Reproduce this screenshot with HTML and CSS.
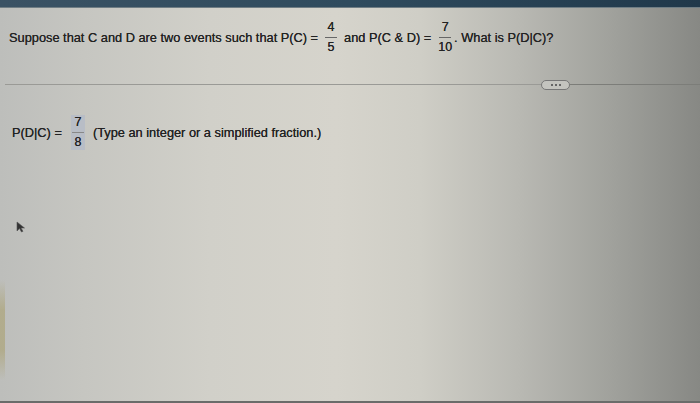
FILE: index.html
```html
<!DOCTYPE html>
<html>
<head>
<meta charset="utf-8">
<link rel="stylesheet" href="styles.css">
</head>
<body>
<div class="screen">
  <div class="topbar"></div>
  <div class="question">
    <span>Suppose that C and D are two events such that P(C) =</span>
    <span class="frac"><span class="num">4</span><span class="den">5</span></span>
    <span>and P(C &amp; D) =</span>
    <span class="frac"><span class="num">7</span><span class="den">10</span></span>
    <span class="tight">. What is P(D|C)?</span>
  </div>
  <div class="divider">
    <div class="rule"></div>
    <div class="more"><span></span><span></span><span></span></div>
    <div class="rule short"></div>
  </div>
  <div class="answer">
    <span>P(D|C) =</span>
    <span class="frac box"><span class="num">7</span><span class="den">8</span></span>
    <span>(Type an integer or a simplified fraction.)</span>
  </div>
  <div class="cursor">
    <svg width="10" height="12" viewBox="0 0 10 12"><path d="M1 1 L1 10 L3.5 7.5 L5.5 11 L7 10.3 L5 7 L8.5 7 Z" fill="#333" stroke="#555" stroke-width="0.6"/></svg>
  </div>
  <div class="leftedge"></div>
  <div class="bottombar"></div>
</div>
</body>
</html>
```

FILE: styles.css
```css
html, body {
  margin: 0;
  padding: 0;
}
body {
  width: 700px;
  height: 403px;
  overflow: hidden;
  font-family: "Liberation Sans", Arial, sans-serif;
  color: #222;
}
.screen {
  position: relative;
  width: 700px;
  height: 403px;
  background: linear-gradient(90deg, #bdbebb 0%, #c6c6c1 12%, #d1d0c9 30%, #d6d4cc 48%, #cfcec6 60%, #b9b9b3 74%, #9fa09b 88%, #878884 100%);
  display: flex;
  flex-direction: column;
}
.topbar {
  height: 7px;
  background: linear-gradient(90deg, #3a5264 0%, #2f4b5e 50%, #20384a 100%);
  border-bottom: 1px solid #6f7d84;
}
.question {
  display: flex;
  align-items: center;
  gap: 5px;
  padding: 9px 0 0 9px;
  font-size: 12.8px;
  height: 40px;
  text-shadow: 0 0 0.5px #333;
}
.tight {
  margin-left: -5px;
}
.frac {
  display: inline-flex;
  flex-direction: column;
  align-items: center;
  font-size: 12.5px;
  line-height: 13px;
  padding: 0 2px;
}
.frac .num {
  border-bottom: 1px solid #666;
  padding: 0 2px 3px;
  min-width: 8px;
  text-align: center;
}
.frac .den {
  padding-top: 3px;
}
.divider {
  display: flex;
  align-items: center;
  margin-top: 22px;
  padding-left: 5px;
  height: 11px;
}
.rule {
  flex: 1;
  height: 1px;
  background: #9a9a96;
}
.rule.short {
  flex: 0 0 130px;
  background: #7c7d79;
}
.more {
  width: 27px;
  height: 8px;
  border: 1px solid #777;
  border-radius: 5px;
  display: flex;
  align-items: center;
  justify-content: center;
  gap: 2px;
  background: #c4c4bf;
}
.more span {
  width: 2px;
  height: 2px;
  background: #666;
}
.answer {
  display: flex;
  align-items: center;
  gap: 5px;
  padding: 25px 0 0 12px;
  font-size: 12.8px;
  text-shadow: 0 0 0.5px #333;
}
.frac.box {
  background: #b8bdc6;
  padding: 1px 1px;
  margin: 0 3px 0 4px;
  position: relative;
}
.frac.box .num {
  border-bottom-color: #888;
}
.cursor {
  position: absolute;
  left: 16px;
  top: 219px;
}
.leftedge {
  position: absolute;
  left: 0;
  top: 280px;
  width: 5px;
  height: 100px;
  background: linear-gradient(180deg, rgba(170,160,110,0) 0%, rgba(170,160,110,0.6) 30%, rgba(170,160,110,0.6) 70%, rgba(170,160,110,0) 100%);
}
.bottombar {
  position: absolute;
  left: 0;
  bottom: 0;
  width: 700px;
  height: 2px;
  background: #6a6c6a;
}
```
